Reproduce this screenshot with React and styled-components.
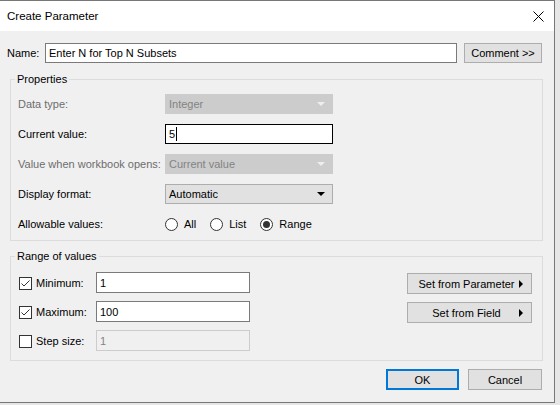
import React from 'react';
import styled, { createGlobalStyle } from 'styled-components';

const GlobalStyle = createGlobalStyle`
  html, body {
    margin: 0;
    padding: 0;
    background: #e6e6e6;
  }
  body {
    font-family: "Segoe UI", "Liberation Sans", Arial, sans-serif;
    font-size: 11px;
    color: #000;
  }
`;

const Dialog = styled.div`
  width: 555px;
  height: 403px;
  box-sizing: border-box;
  border: 1px solid #777;
  border-left: none;
  background: #f0f0f0;
  display: flex;
  flex-direction: column;
`;

const TitleBar = styled.div`
  height: 30px;
  flex: none;
  background: #fff;
  display: flex;
  align-items: center;
  justify-content: space-between;
  padding: 0 10px 0 7px;
  font-size: 11.5px;
`;

const Body = styled.div`
  display: flex;
  flex-direction: column;
  padding: 12px 12px 0 7px;
`;

const NameRow = styled.div`
  display: flex;
  align-items: center;
  height: 20px;
  gap: 7px;
`;

const NameLabel = styled.span`
  width: 31px;
`;

const TextBox = styled.div`
  box-sizing: border-box;
  height: ${p => p.$h || 20}px;
  width: ${p => (p.$w ? `${p.$w}px` : 'auto')};
  flex: ${p => (p.$w ? 'none' : '1')};
  display: flex;
  align-items: center;
  padding-left: 3px;
  background: ${p => (p.$disabled ? '#f0f0f0' : '#fff')};
  border: 1px solid ${p => (p.$focused ? '#000' : p.$disabled ? '#cccccc' : '#7a7a7a')};
  color: ${p => (p.$disabled ? '#838383' : '#000')};
  white-space: nowrap;
`;

const Caret = styled.span`
  display: inline-block;
  width: 1px;
  height: 14px;
  margin-left: 1px;
  background: #000;
`;

const Button = styled.div`
  box-sizing: border-box;
  width: ${p => p.$w}px;
  height: ${p => p.$h || 21}px;
  flex: none;
  display: flex;
  align-items: center;
  justify-content: center;
  background: #e1e1e1;
  border: ${p => (p.$default ? '2px solid #0078d7' : '1px solid #adadad')};
  white-space: nowrap;
`;

const Group = styled.fieldset`
  margin: ${p => p.$top}px -1px 0 3px;
  border: 1px solid #dcdcdc;
  padding: ${p => p.$pad};
  min-width: 0;
`;

const Legend = styled.legend`
  line-height: 16px;
  padding: 0 2px;
  margin-left: -3px;
`;

const PropList = styled.div`
  display: flex;
  flex-direction: column;
  gap: 10px;
`;

const PropRow = styled.div`
  display: flex;
  align-items: center;
  height: 20px;
`;

const PropLabel = styled.span`
  width: 147px;
  flex: none;
  color: ${p => (p.$disabled ? '#6d6d6d' : '#000')};
  white-space: nowrap;
`;

const Select = styled.div`
  box-sizing: border-box;
  width: 168px;
  height: 20px;
  display: flex;
  align-items: center;
  justify-content: space-between;
  padding: 0 7px 0 3px;
  background: ${p => (p.$disabled ? '#cccccc' : '#e1e1e1')};
  border: 1px solid ${p => (p.$disabled ? '#cccccc' : '#adadad')};
  color: ${p => (p.$disabled ? '#838383' : '#000')};
`;

const DownArrow = styled.span`
  width: 0;
  height: 0;
  border-left: 4px solid transparent;
  border-right: 4px solid transparent;
  border-top: 4px solid ${p => (p.$disabled ? '#eeeeee' : '#000')};
`;

const RightArrow = styled.span`
  width: 0;
  height: 0;
  border-top: 4px solid transparent;
  border-bottom: 4px solid transparent;
  border-left: 4px solid #000;
`;

const RadioGroup = styled.div`
  display: flex;
  align-items: center;
  gap: 14px;
`;

const RadioItem = styled.label`
  display: flex;
  align-items: center;
  gap: 6px;
`;

const RadioCircle = styled.span`
  box-sizing: border-box;
  width: 13px;
  height: 13px;
  border-radius: 50%;
  border: 1px solid #333;
  background: #fff;
  display: flex;
  align-items: center;
  justify-content: center;
  &::after {
    content: '';
    width: 7px;
    height: 7px;
    border-radius: 50%;
    background: ${p => (p.$checked ? '#333' : 'transparent')};
  }
`;

const RangeLayout = styled.div`
  display: flex;
  justify-content: space-between;
`;

const RangeList = styled.div`
  display: flex;
  flex-direction: column;
  gap: 8px;
`;

const RangeRow = styled.div`
  display: flex;
  align-items: center;
  height: 21px;
`;

const Check = styled.span`
  box-sizing: border-box;
  width: 13px;
  height: 13px;
  margin: 1px 4px 0 1px;
  border: 1px solid #333;
  background: #fff;
  display: flex;
  align-items: center;
  justify-content: center;
`;

const RangeLabel = styled.span`
  width: 60px;
`;

const SideButtons = styled.div`
  display: flex;
  flex-direction: column;
  gap: 8px;
  margin-top: 1px;
`;

const MenuButton = styled(Button)`
  justify-content: space-between;
  padding: 0 8px 0 6px;
`;

const MenuText = styled.span`
  flex: 1;
  text-align: center;
`;

const Footer = styled.div`
  display: flex;
  justify-content: flex-end;
  gap: 9px;
  margin-top: 8px;
`;

const CloseIcon = () => (
  <svg width="11" height="11" viewBox="0 0 11 11">
    <path d="M0.5 0.5 L10.5 10.5 M10.5 0.5 L0.5 10.5" stroke="#000" strokeWidth="1" fill="none" />
  </svg>
);

const CheckMark = () => (
  <svg width="11" height="11" viewBox="0 0 11 11">
    <path d="M1.5 5.5 L4 8 L9.5 2.5" stroke="#333" strokeWidth="1" fill="none" />
  </svg>
);

const rangeRows = [
  { label: 'Minimum:', value: '1', checked: true },
  { label: 'Maximum:', value: '100', checked: true },
  { label: 'Step size:', value: '1', checked: false, disabled: true },
];

const App = () => {
  return (
    <>
      <GlobalStyle />
      <Dialog>
        <TitleBar>
          <span>Create Parameter</span>
          <CloseIcon />
        </TitleBar>
        <Body>
          <NameRow>
            <NameLabel>Name:</NameLabel>
            <TextBox>Enter N for Top N Subsets</TextBox>
            <Button $w={78} $h={20}>Comment &gt;&gt;</Button>
          </NameRow>

          <Group $top={8} $pad="7px 10px 6px 7px">
            <Legend>Properties</Legend>
            <PropList>
              <PropRow>
                <PropLabel $disabled>Data type:</PropLabel>
                <Select $disabled>
                  <span>Integer</span>
                  <DownArrow $disabled />
                </Select>
              </PropRow>
              <PropRow>
                <PropLabel>Current value:</PropLabel>
                <TextBox $w={168} $focused>
                  5<Caret />
                </TextBox>
              </PropRow>
              <PropRow>
                <PropLabel $disabled>Value when workbook opens:</PropLabel>
                <Select $disabled>
                  <span>Current value</span>
                  <DownArrow $disabled />
                </Select>
              </PropRow>
              <PropRow>
                <PropLabel>Display format:</PropLabel>
                <Select>
                  <span>Automatic</span>
                  <DownArrow />
                </Select>
              </PropRow>
              <PropRow>
                <PropLabel>Allowable values:</PropLabel>
                <RadioGroup>
                  <RadioItem><RadioCircle />All</RadioItem>
                  <RadioItem><RadioCircle />List</RadioItem>
                  <RadioItem><RadioCircle $checked />Range</RadioItem>
                </RadioGroup>
              </PropRow>
            </PropList>
          </Group>

          <Group $top={7} $pad="8px 10px 9px 7px">
            <Legend>Range of values</Legend>
            <RangeLayout>
              <RangeList>
                {rangeRows.map(r => (
                  <RangeRow key={r.label}>
                    <Check>{r.checked && <CheckMark />}</Check>
                    <RangeLabel>{r.label}</RangeLabel>
                    <TextBox $w={154} $h={21} $disabled={r.disabled}>{r.value}</TextBox>
                  </RangeRow>
                ))}
              </RangeList>
              <SideButtons>
                <MenuButton $w={125}>
                  <MenuText>Set from Parameter</MenuText>
                  <RightArrow />
                </MenuButton>
                <MenuButton $w={125}>
                  <MenuText>Set from Field</MenuText>
                  <RightArrow />
                </MenuButton>
              </SideButtons>
            </RangeLayout>
          </Group>

          <Footer>
            <Button $w={73} $default>OK</Button>
            <Button $w={74}>Cancel</Button>
          </Footer>
        </Body>
      </Dialog>
    </>
  );
};

export default App;
